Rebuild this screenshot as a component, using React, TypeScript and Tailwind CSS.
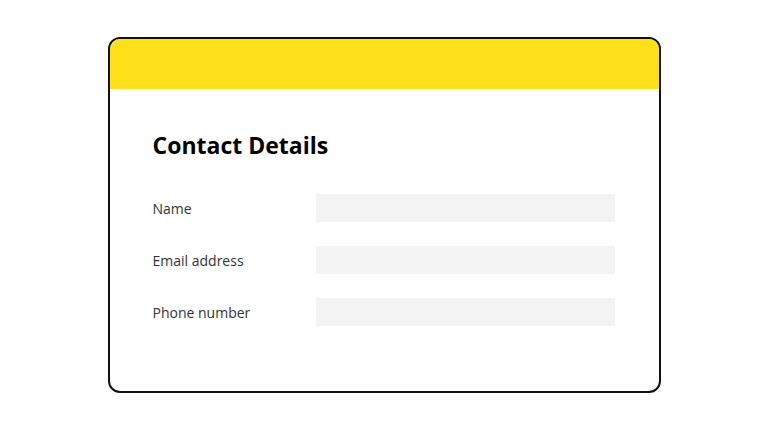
export default function App() {
  const fields = ['Name', 'Email address', 'Phone number'];
  return (
    <div className="w-[768px] h-[430px] bg-white flex items-start justify-center pt-[37px] font-['Open_Sans',sans-serif]">
      <div className="w-[553px] h-[356px] border-2 border-[#111] rounded-[12px] overflow-hidden flex flex-col">
        <div className="h-[50px] bg-[#ffe01b] shrink-0" />
        <div className="pl-[43px] pr-[44px] pt-[40px]">
          <h2 className="text-[23px] leading-[32px] font-bold text-black">Contact Details</h2>
          <div className="mt-[33px] flex flex-col gap-[24px]">
            {fields.map((f) => (
              <div key={f} className="flex items-center">
                <label className="w-[163px] text-[14px] text-[#333]">{f}</label>
                <div className="flex-1 h-[28px] bg-[#f3f3f3]" />
              </div>
            ))}
          </div>
        </div>
      </div>
    </div>
  );
}
